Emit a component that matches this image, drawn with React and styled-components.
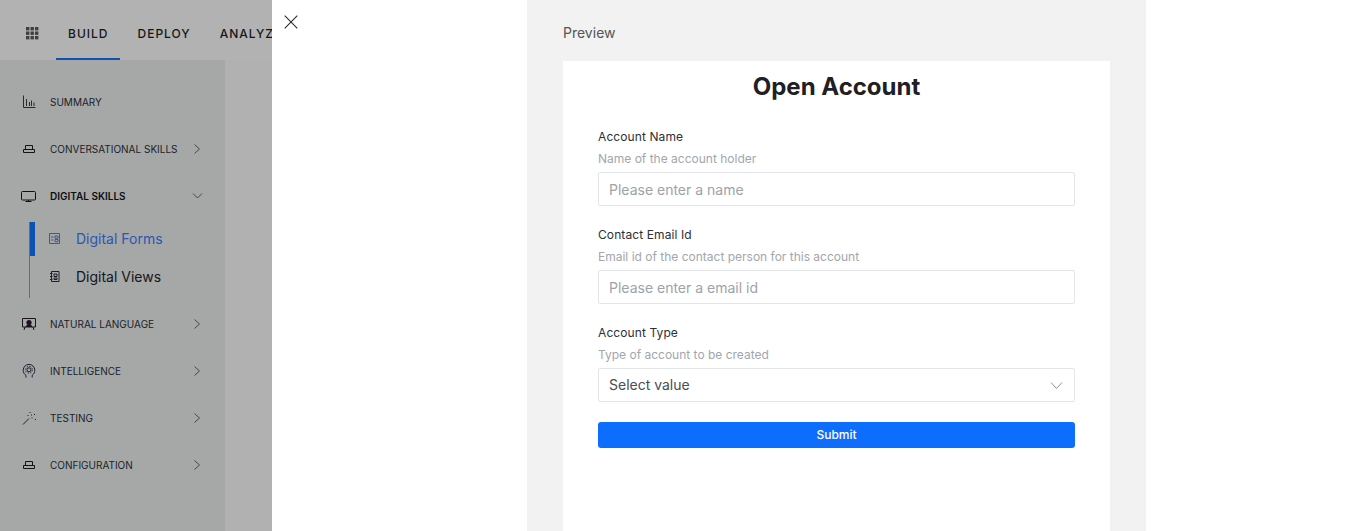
import React from 'react';
import styled, { createGlobalStyle } from 'styled-components';

const GlobalStyle = createGlobalStyle`
  html, body {
    margin: 0;
    height: 100%;
    overflow: hidden;
    font-family: Inter, 'Noto Sans', sans-serif;
  }

  * {
    box-sizing: border-box;
  }
`;

const Page = styled.div`
  display: flex;
  flex-direction: column;
  height: 100vh;
  background-color: #fefefe;
`;

const TopBar = styled.header`
  display: flex;
  flex: 0 0 60px;
  align-items: stretch;
  padding-left: 26px;
  background-color: #fff;
`;

const AppsIcon = styled.svg`
  align-self: center;
  width: 13px;
  height: 13px;
  margin: 6px 17px 0 0;
  color: #5b5b5b;
`;

const Tab = styled.div`
  display: flex;
  align-items: center;
  padding: 8px 12px 0;
  margin-right: 5px;
  border-bottom: 2px solid ${({ $active }) => ($active ? '#1076ff' : 'transparent')};
  color: #1d1f27;
  font-size: 12px;
  font-weight: 500;
  letter-spacing: 1px;
  white-space: nowrap;
`;

const Body = styled.div`
  display: flex;
  flex: 1;
  min-height: 0;
`;

const Sidebar = styled.nav`
  flex: 0 0 225px;
  padding-top: 18px;
  background-color: #eef1f0;
`;

const NavRow = styled.div`
  display: flex;
  align-items: center;
  height: 47px;
  padding-left: 21px;
  color: ${({ $open }) => ($open ? '#14161d' : '#2b3040')};
  font-size: 10px;
  font-weight: ${({ $open }) => ($open ? 600 : 400)};
  white-space: nowrap;
`;

const NavIcon = styled.svg`
  flex: 0 0 16px;
  width: 16px;
  height: 16px;
  margin-right: 13px;
  color: ${({ $tint }) => $tint};
`;

const NavLabel = styled.span`
  flex: 0 0 141px;
`;

const Chevron = styled.svg`
  width: 12px;
  height: 12px;
  color: #5f6675;
`;

const SubList = styled.div`
  display: flex;
  flex-direction: column;
  gap: 4px;
  height: 76px;
  margin: 3px 0 2px 29px;
  border-left: 1px solid #9a9c9b;
`;

const SubRow = styled.div`
  display: flex;
  align-items: center;
  height: 34px;
  margin-left: ${({ $active }) => ($active ? '0' : '1px')};
  padding-bottom: 2px;
  padding-left: ${({ $active }) => ($active ? '14px' : '18px')};
  border-left: ${({ $active }) => ($active ? '5px solid #1076ff' : 'none')};
  color: ${({ $active }) => ($active ? '#3e7cff' : '#22252e')};
  font-size: 14px;
`;

const SubIcon = styled.svg`
  flex: 0 0 12px;
  width: 12px;
  height: 13px;
  margin-right: 15px;
  color: ${({ $tint }) => $tint};
`;

const Content = styled.main`
  flex: 1;
  background-color: #fefefe;
`;

const Scrim = styled.div`
  position: fixed;
  inset: 0;
  background-color: rgba(0, 0, 0, 0.3);
`;

const Drawer = styled.aside`
  position: fixed;
  top: 0;
  right: 0;
  bottom: 0;
  left: 272px;
  display: flex;
  overflow: hidden;
  background-color: #fff;
`;

const CloseSlot = styled.div`
  flex: 0 0 255px;
  padding: 15px 0 0 12px;
`;

const CloseIcon = styled.svg`
  display: block;
  width: 14px;
  height: 14px;
  color: #2a2a2a;
`;

const PreviewColumn = styled.section`
  display: flex;
  flex: 0 0 619px;
  flex-direction: column;
  padding: 0 36px;
  background-color: #f2f2f2;
`;

const PreviewTitle = styled.div`
  flex: 0 0 61px;
  padding-top: 24px;
  color: #555;
  font-size: 14px;
  line-height: 18px;
`;

const FormCard = styled.form`
  flex: 1;
  padding: 11px 35px 0;
  background-color: #fff;
`;

const FormTitle = styled.h1`
  margin: 0 0 27px;
  color: #1e2025;
  font-size: 24px;
  font-weight: 700;
  line-height: 30px;
  text-align: center;
`;

const Field = styled.div`
  margin-bottom: 21px;

  &:last-of-type {
    margin-bottom: 20px;
  }
`;

const FieldLabel = styled.label`
  display: block;
  color: #2c2f36;
  font-size: 12px;
  font-weight: 400;
  line-height: 16px;
  letter-spacing: 0.1px;
`;

const FieldHelp = styled.div`
  margin-top: 6px;
  margin-bottom: 5px;
  color: #a2a6ae;
  font-size: 12px;
  line-height: 16px;
`;

const TextInput = styled.input`
  display: block;
  width: 100%;
  height: 34px;
  padding: 0 10px;
  border: 1px solid #e3e5ec;
  border-radius: 2px;
  outline: none;
  color: #2c2f36;
  font-family: inherit;
  font-size: 14px;

  &::placeholder {
    color: #9ea2aa;
    opacity: 1;
  }
`;

const SelectBox = styled.div`
  display: flex;
  align-items: center;
  justify-content: space-between;
  height: 34px;
  padding: 0 11px 2px 10px;
  border: 1px solid #e3e5ec;
  border-radius: 2px;
  color: #4a4d54;
  font-size: 14px;
`;

const SelectChevron = styled.svg`
  width: 13px;
  height: 13px;
  margin-top: 2px;
  color: #8d929c;
`;

const SubmitButton = styled.button`
  display: block;
  width: 100%;
  height: 26px;
  padding: 0 0 2px;
  border: none;
  border-radius: 3px;
  background-color: #0d6efd;
  color: #fff;
  font-family: inherit;
  font-size: 12px;
  font-weight: 500;
`;

const stroke = { fill: 'none', stroke: 'currentColor', strokeWidth: 1 };

const Right = () => (
  <Chevron viewBox="0 0 12 12"><path d="M3.5 1.5l5 4.5-5 4.5" {...stroke} /></Chevron>
);

const Down = () => (
  <Chevron viewBox="0 0 12 12"><path d="M2 3.5l4.5 4.5 4.5-4.5" {...stroke} /></Chevron>
);

const ChartGlyph = () => (
  <NavIcon viewBox="0 0 16 16" $tint="#4a3448">
    <path d="M2.500 1.500V13.500H14.500M5.500 5V12M8.500 8V12M10.500 6.500V12M13 8.500V12" {...stroke} />
  </NavIcon>
);

const StackGlyph = () => (
  <NavIcon viewBox="0 0 16 16" $tint="#1c1e24">
    <path d="M4.500 4.500h7v4h-7zM2.500 8.500h11v3h-11z" {...stroke} />
  </NavIcon>
);

const MonitorGlyph = () => (
  <NavIcon viewBox="0 0 16 16" $tint="#15171c">
    <path d="M1.500 3.500h12a1 1 0 0 1 1 1v6.500a1 1 0 0 1-1 1h-12a1 1 0 0 1-1-1V4.500a1 1 0 0 1 1-1zM7.500 12v1.500M4.500 13.500h6" {...stroke} />
  </NavIcon>
);

const LanguageGlyph = () => (
  <NavIcon viewBox="0 0 16 16" $tint="#2a1a2c">
    <path d="M1.500 2.500h13v8.500h-13zM4 11l-1 3M12 11l1 3" {...stroke} />
    <circle cx="8" cy="6.500" r="2.600" fill="currentColor" />
    <path d="M5 11a3 2.400 0 0 1 6 0z" fill="currentColor" />
  </NavIcon>
);

const BrainGlyph = () => (
  <NavIcon viewBox="0 0 16 16" $tint="#2c3040">
    <path d="M5 14.500v-2.200C3.200 11.300 2.200 9.300 2.200 7.200a5.800 5.800 0 0 1 11.600 0c0 2.100-1 4-2.600 5v2.300" {...stroke} />
    <circle cx="8" cy="6.800" r="2" {...stroke} />
    <circle cx="8" cy="6.800" r="3.400" {...stroke} strokeDasharray="1.400 1.270" />
  </NavIcon>
);

const WandGlyph = () => (
  <NavIcon viewBox="0 0 16 16" $tint="#2c2d36">
    <path d="M2 14.500L8 8.500" {...stroke} />
    <path d="M9 2v1.500M13.500 4v1.500M6.500 5.500H8M11 7.500v1M14 9.500h1M10 5h1" {...stroke} strokeDasharray="1 1" />
  </NavIcon>
);

const navAfter = [
  { label: 'Natural Language', Icon: LanguageGlyph },
  { label: 'Intelligence', Icon: BrainGlyph },
  { label: 'Testing', Icon: WandGlyph },
  { label: 'Configuration', Icon: StackGlyph },
];

const NavItem = ({ label, Icon, open, arrow }) => (
  <NavRow $open={open}>
    <Icon />
    <NavLabel>{label.toUpperCase()}</NavLabel>
    {arrow === 'right' && <Right />}
    {arrow === 'down' && <Down />}
  </NavRow>
);

const App = () => (
  <>
    <GlobalStyle />
    <Page>
      <TopBar>
        <AppsIcon viewBox="0 0 13 13" fill="currentColor">
          {[0, 4.5, 9].flatMap((y) => [0, 4.5, 9].map((x) => (
            <rect key={`${x}-${y}`} x={x} y={y} width="3.4" height="3.4" />
          )))}
        </AppsIcon>
        <Tab $active>BUILD</Tab>
        <Tab>DEPLOY</Tab>
        <Tab>ANALYZE</Tab>
      </TopBar>
      <Body>
        <Sidebar>
          <NavItem label="Summary" Icon={ChartGlyph} />
          <NavItem label="Conversational Skills" Icon={StackGlyph} arrow="right" />
          <NavItem label="Digital Skills" Icon={MonitorGlyph} arrow="down" open />
          <SubList>
            <SubRow $active>
              <SubIcon viewBox="0 0 12 13" $tint="#5f7fd6">
                <path d="M0.500 1.500h10v10h-10zM2 5h2.500M2 8h2.500M6 4h3v2.200H6zM6 7.500h3v2.200H6z" {...stroke} />
              </SubIcon>
              Digital Forms
            </SubRow>
            <SubRow>
              <SubIcon viewBox="0 0 12 13" $tint="#2b3040">
                <path d="M2.500 1.500h7.500v10H2.500zM1 3.500h2.500M1 6.500h2.500M1 9.500h2.500M5 4h3v2.500H5zM5 8h3v1.500H5z" {...stroke} />
              </SubIcon>
              Digital Views
            </SubRow>
          </SubList>
          {navAfter.map((item) => (
            <NavItem key={item.label} label={item.label} Icon={item.Icon} arrow="right" />
          ))}
        </Sidebar>
        <Content />
      </Body>
    </Page>
    <Scrim />
    <Drawer>
      <CloseSlot>
        <CloseIcon viewBox="0 0 14 14">
          <path d="M0.700 0.700l12.600 12.600M13.300 0.700L0.700 13.300" fill="none" stroke="currentColor" strokeWidth="1.100" />
        </CloseIcon>
      </CloseSlot>
      <PreviewColumn>
        <PreviewTitle>Preview</PreviewTitle>
        <FormCard>
          <FormTitle>Open Account</FormTitle>
          <Field>
            <FieldLabel>Account Name</FieldLabel>
            <FieldHelp>Name of the account holder</FieldHelp>
            <TextInput placeholder="Please enter a name" />
          </Field>
          <Field>
            <FieldLabel>Contact Email Id</FieldLabel>
            <FieldHelp>Email id of the contact person for this account</FieldHelp>
            <TextInput placeholder="Please enter a email id" />
          </Field>
          <Field>
            <FieldLabel>Account Type</FieldLabel>
            <FieldHelp>Type of account to be created</FieldHelp>
            <SelectBox>
              Select value
              <SelectChevron viewBox="0 0 13 13">
                <path d="M1 3.500l5.500 6 5.500-6" {...stroke} />
              </SelectChevron>
            </SelectBox>
          </Field>
          <SubmitButton type="button">Submit</SubmitButton>
        </FormCard>
      </PreviewColumn>
    </Drawer>
  </>
);

export default App;
